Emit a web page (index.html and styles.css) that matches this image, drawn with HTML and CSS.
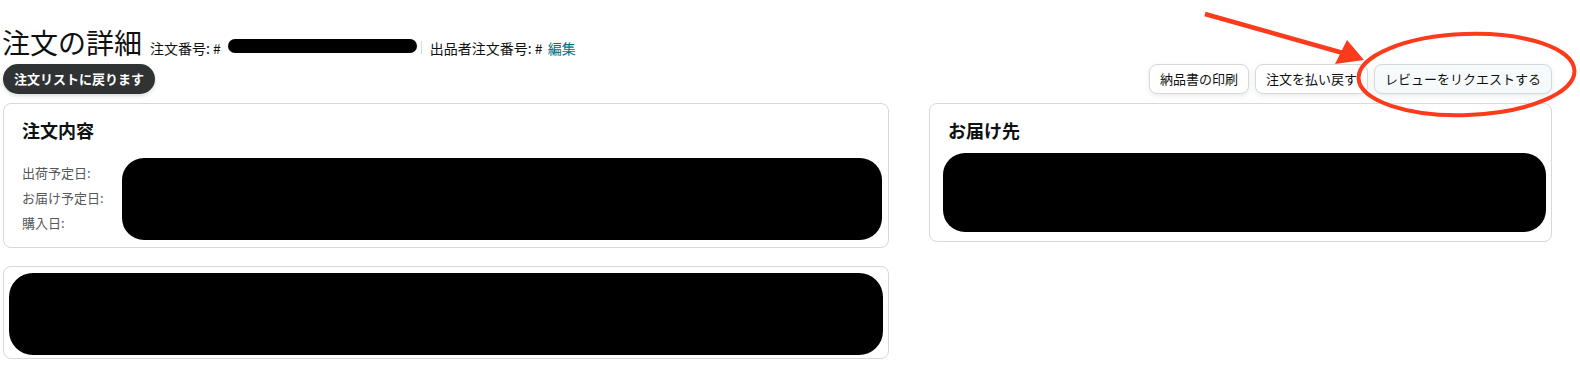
FILE: index.html
```html
<!DOCTYPE html>
<html lang="ja">
<head>
<meta charset="utf-8">
<title>注文の詳細</title>
<link rel="stylesheet" href="styles.css">
</head>
<body>
<div class="page">
  <div class="title-row">
    <h1 class="page-title">注文の詳細</h1>
    <span class="meta">注文番号: #</span>
    <span class="redact-pill"></span>
    <span class="divider"></span>
    <span class="meta">出品者注文番号: # <a class="link" href="#">編集</a></span>
  </div>
  <div class="action-row">
    <button class="btn-back">注文リストに戻ります</button>
    <div class="btn-group">
      <button class="btn">納品書の印刷</button>
      <button class="btn">注文を払い戻す</button>
      <button class="btn btn-light">レビューをリクエストする</button>
    </div>
  </div>
  <div class="cards">
    <section class="card card-order">
      <h2 class="card-title">注文内容</h2>
      <div class="order-row">
        <div class="labels">
          <div>出荷予定日:</div>
          <div>お届け予定日:</div>
          <div>購入日:</div>
        </div>
        <div class="redact redact-order"></div>
      </div>
    </section>
    <section class="card card-ship">
      <h2 class="card-title">お届け先</h2>
      <div class="redact redact-ship"></div>
    </section>
    <section class="card card-items">
      <div class="redact redact-items"></div>
    </section>
  </div>
  <svg class="annot" width="1580" height="383" viewBox="0 0 1580 383" xmlns="http://www.w3.org/2000/svg">
    <line x1="1205" y1="14" x2="1343" y2="53" stroke="#fc3a1c" stroke-width="4.5"/>
    <polygon points="1335,64 1347,40 1364,60" fill="#fc3a1c"/>
    <ellipse cx="1466.5" cy="74.5" rx="108" ry="40.5" fill="none" stroke="#fc3a1c" stroke-width="4" transform="rotate(-2 1466.5 74.5)"/>
  </svg>
</div>
</body>
</html>
```
FILE: styles.css
```css
* { box-sizing: border-box; }
html, body { margin: 0; padding: 0; background: #fff; }
body {
  font-family: "Noto Sans CJK JP", "Noto Sans", sans-serif;
  color: #0f1111;
}
.page {
  position: relative;
  width: 1580px;
  height: 383px;
  padding: 25px 28px 0 3px;
}
.title-row {
  display: flex;
  align-items: baseline;
  height: 34px;
  margin-bottom: 5px;
}
.page-title {
  margin: 0 8px 0 -1px;
  font-size: 28px;
  line-height: 34px;
  font-weight: 400;
}
.meta {
  font-size: 14px;
  line-height: 20px;
  color: #0f1111;
}
.link { color: #007185; text-decoration: none; margin-left: 2px; }
.redact-pill {
  display: inline-block;
  width: 189px;
  height: 14px;
  margin-left: 7px;
  background: #000;
  border-radius: 7px;
  align-self: center;
  position: relative;
  top: 4px;
}
.divider {
  display: inline-block;
  width: 1px;
  height: 13px;
  background: #d5d9d9;
  margin: 0 8px 0 4px;
  align-self: center;
  position: relative;
  top: 5px;
}
.action-row {
  display: flex;
  justify-content: space-between;
  align-items: center;
  height: 30px;
  margin-bottom: 9px;
}
.btn-back {
  height: 30px;
  padding: 0 11px;
  border: 0;
  border-radius: 15px;
  background: #303333;
  color: #fff;
  font-family: inherit;
  font-size: 13px;
  font-weight: 700;
  line-height: 30px;
  box-shadow: 0 2px 4px rgba(15, 17, 17, 0.15);
}
.btn-group { display: flex; gap: 6px; }
.btn {
  height: 30px;
  padding: 0 10px;
  border: 1px solid #d5d9d9;
  border-radius: 8px;
  background: #fff;
  color: #0f1111;
  font-family: inherit;
  font-size: 13px;
  line-height: 28px;
  box-shadow: 0 2px 5px rgba(213, 217, 217, 0.5);
}
.btn-light { background: #f7fafa; }
.cards {
  display: grid;
  grid-template-columns: 886px 623px;
  column-gap: 40px;
  row-gap: 18px;
  align-items: start;
}
.card {
  border: 1px solid #d5d9d9;
  border-radius: 8px;
  background: #fff;
}
.card-title {
  margin: 0;
  font-size: 18px;
  line-height: 24px;
  font-weight: 700;
}
.card-order { padding: 14px 6px 7px 18px; }
.order-row {
  display: flex;
  align-items: center;
  margin-top: 16px;
}
.labels {
  flex: 0 0 100px;
  font-size: 13px;
  line-height: 25px;
  color: #565959;
  margin-top: -3px;
}
.redact { background: #000; }
.redact-order { flex: 1; height: 82px; border-radius: 22px; }
.card-ship { padding: 14px 5px 9px 18px; }
.redact-ship { height: 79px; margin: 11px 0 0 -5px; border-radius: 22px; }
.card-items { grid-column: 1; padding: 6px 5px 3px 5px; }
.redact-items { height: 82px; border-radius: 24px; }
.annot {
  position: absolute;
  left: 0;
  top: 0;
  pointer-events: none;
}
```
